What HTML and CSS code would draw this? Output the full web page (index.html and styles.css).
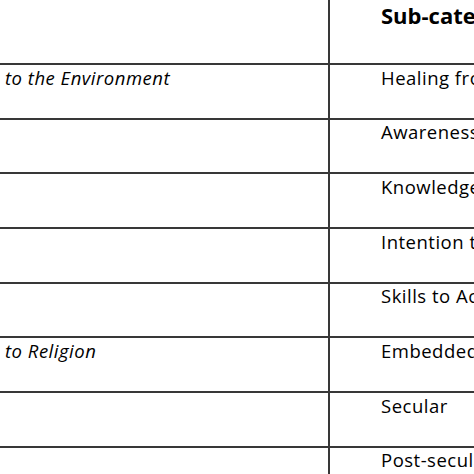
FILE: index.html
```html
<!DOCTYPE html>
<html>
<head>
<meta charset="utf-8">
<link rel="stylesheet" href="styles.css">
</head>
<body>
<div class="table">
  <div class="cell cat head"></div>
  <div class="cell sub head">Sub-categories</div>

  <div class="cell cat">to the Environment</div>
  <div class="cell sub">Healing from Nature</div>
  <div class="cell cat"></div>
  <div class="cell sub">Awareness</div>
  <div class="cell cat"></div>
  <div class="cell sub">Knowledge</div>
  <div class="cell cat"></div>
  <div class="cell sub">Intention to Act</div>
  <div class="cell cat"></div>
  <div class="cell sub">Skills to Act</div>

  <div class="cell cat">to Religion</div>
  <div class="cell sub">Embedded</div>
  <div class="cell cat"></div>
  <div class="cell sub">Secular</div>
  <div class="cell cat"></div>
  <div class="cell sub">Post-secular</div>
</div>
</body>
</html>
```

FILE: styles.css
```css
html, body {
  margin: 0;
  padding: 0;
  background: #ffffff;
  overflow: hidden;
}

.table {
  display: grid;
  grid-template-columns: 330px 300px;
  grid-template-rows: 65px repeat(8, 54.7px);
  width: 630px;
  font-family: "Open Sans", "Liberation Sans", sans-serif;
  color: #000000;
}

.cell {
  box-sizing: border-box;
  border-bottom: 2px solid #383838;
  white-space: nowrap;
  overflow: hidden;
  font-size: 18.5px;
  line-height: 22px;
  letter-spacing: 0.5px;
  padding-top: 1.5px;
}

.cat {
  border-right: 2px solid #383838;
  padding-left: 5px;
  font-style: italic;
}

.sub {
  padding-left: 51px;
}

.head {
  font-size: 22px;
  line-height: 26px;
  font-weight: 700;
  letter-spacing: 0;
  padding-top: 1.5px;
}
```
